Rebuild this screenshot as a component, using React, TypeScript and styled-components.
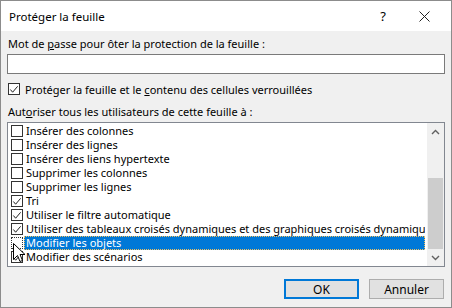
import styled, { createGlobalStyle } from "styled-components";

const GlobalStyle = createGlobalStyle`
  html, body {
    margin: 0;
    padding: 0;
    background: #ffffff;
  }
  body {
    font-family: "Segoe UI", "Noto Sans", "DejaVu Sans", sans-serif;
    font-size: 11px;
    color: #000000;
  }
`;

const items = [
  { label: "Insérer des colonnes", checked: false },
  { label: "Insérer des lignes", checked: false },
  { label: "Insérer des liens hypertexte", checked: false },
  { label: "Supprimer les colonnes", checked: false },
  { label: "Supprimer les lignes", checked: false },
  { label: "Tri", checked: true },
  { label: "Utiliser le filtre automatique", checked: true },
  {
    label:
      "Utiliser des tableaux croisés dynamiques et des graphiques croisés dynamiques",
    checked: true,
  },
  { label: "Modifier les objets", checked: false, selected: true },
  { label: "Modifier des scénarios", checked: true },
];

function Check({ checked, dotted }: { checked?: boolean; dotted?: boolean }) {
  return (
    <Box $dotted={dotted}>
      {checked && (
        <svg width="11" height="11" viewBox="0 0 11 11">
          <polyline
            points="1.5,5.5 4,8.5 9.5,2"
            fill="none"
            stroke="#222"
            strokeWidth="1.1"
          />
        </svg>
      )}
    </Box>
  );
}

export default function App() {
  return (
    <>
      <GlobalStyle />
      <Window>
        <TitleBar>
          <Title>Protéger la feuille</Title>
          <Help>?</Help>
          <CloseButton>
            <svg width="11" height="11" viewBox="0 0 11 11">
              <path d="M0.5 0.5 L10.5 10.5 M10.5 0.5 L0.5 10.5" stroke="#222" strokeWidth="1" />
            </svg>
          </CloseButton>
        </TitleBar>
        <Body>
          <Label>
            Mot de <u>p</u>asse pour ôter la protection de la feuille :
          </Label>
          <Input />
          <CheckRow>
            <Check checked />
            <span>
              Protéger la feuille et le <u>c</u>ontenu des cellules verrouillées
            </span>
          </CheckRow>
          <ListLabel>
            Aut<u>o</u>riser tous les utilisateurs de cette feuille à :
          </ListLabel>
          <List>
            <Items>
              {items.map((it) => (
                <Row key={it.label}>
                  <Check checked={it.checked} dotted={it.selected} />
                  <ItemText $selected={it.selected}>{it.label}</ItemText>
                </Row>
              ))}
            </Items>
            <Scrollbar>
              <Arrow>
                <svg width="9" height="6" viewBox="0 0 9 6">
                  <polyline points="1,5 4.5,1.5 8,5" fill="none" stroke="#606060" strokeWidth="1.4" />
                </svg>
              </Arrow>
              <Track>
                <Thumb />
              </Track>
              <Arrow>
                <svg width="9" height="6" viewBox="0 0 9 6">
                  <polyline points="1,1 4.5,4.5 8,1" fill="none" stroke="#606060" strokeWidth="1.4" />
                </svg>
              </Arrow>
            </Scrollbar>
          </List>
          <Footer>
            <Button $primary>OK</Button>
            <Button>Annuler</Button>
          </Footer>
        </Body>
        <Cursor width="13" height="21" viewBox="0 0 13 21">
          <path
            d="M0.5 0.5 L0.5 16.5 L4.5 12.5 L7 18.5 L9.5 17.5 L7 11.5 L12 11.5 Z"
            fill="#ffffff"
            stroke="#000000"
            strokeWidth="1"
          />
        </Cursor>
      </Window>
    </>
  );
}

const Window = styled.div`
  position: relative;
  width: 452px;
  height: 308px;
  box-sizing: border-box;
  border: 1px solid #8c8c8c;
  display: flex;
  flex-direction: column;
  overflow: hidden;
`;

const TitleBar = styled.div`
  height: 30px;
  flex: none;
  display: flex;
  align-items: center;
  background: #ffffff;
  padding-left: 8px;
`;

const Title = styled.div`
  flex: 1;
  font-size: 11.5px;
`;

const Help = styled.div`
  width: 20px;
  font-size: 13px;
  text-align: center;
  margin-right: 8px;
`;

const CloseButton = styled.div`
  width: 46px;
  display: flex;
  justify-content: center;
  padding-right: 4px;
  padding-top: 1px;
`;

const Body = styled.div`
  flex: 1;
  background: #f0f0f0;
  padding: 5px 6px 0 6px;
  display: flex;
  flex-direction: column;
`;

const Label = styled.div`
  line-height: 16px;
  padding-left: 1px;
`;

const Input = styled.div`
  margin-top: 2px;
  height: 20px;
  box-sizing: border-box;
  border: 1px solid #7a7a7a;
  background: #ffffff;
`;

const CheckRow = styled.div`
  display: flex;
  align-items: center;
  gap: 5px;
  margin-top: 8px;
  height: 14px;
  padding-left: 1px;
`;

const Box = styled.div<{ $dotted?: boolean }>`
  width: 12px;
  height: 12px;
  box-sizing: border-box;
  border: 1px ${({ $dotted }) => ($dotted ? "dotted" : "solid")} #333333;
  background: #ffffff;
  display: flex;
  align-items: center;
  justify-content: center;
  flex: none;
`;

const ListLabel = styled.div`
  line-height: 16px;
  margin-top: 8px;
  padding-left: 1px;
`;

const List = styled.div`
  margin-top: 2px;
  height: 145px;
  box-sizing: border-box;
  border: 1px solid #828790;
  background: #ffffff;
  display: flex;
  width: 438px;
`;

const Items = styled.div`
  flex: 1;
  min-width: 0;
  padding-top: 1px;
`;

const Row = styled.div`
  height: 14px;
  display: flex;
  align-items: center;
  padding-left: 3px;
`;

const ItemText = styled.div<{ $selected?: boolean }>`
  flex: 1;
  min-width: 0;
  white-space: nowrap;
  overflow: hidden;
  line-height: 14px;
  margin-left: 1px;
  margin-right: 2px;
  padding-left: 2px;
  background: ${({ $selected }) => ($selected ? "#0078d7" : "transparent")};
  color: ${({ $selected }) => ($selected ? "#ffffff" : "#000000")};
  outline: ${({ $selected }) => ($selected ? "1px dotted #f0c060" : "none")};
  outline-offset: -1px;
`;

const Scrollbar = styled.div`
  width: 17px;
  flex: none;
  background: #f0f0f0;
  display: flex;
  flex-direction: column;
`;

const Arrow = styled.div`
  height: 17px;
  display: flex;
  align-items: center;
  justify-content: center;
`;

const Track = styled.div`
  flex: 1;
  display: flex;
  flex-direction: column;
  justify-content: flex-end;
`;

const Thumb = styled.div`
  height: 71px;
  margin: 0 1px;
  background: #cdcdcd;
`;

const Footer = styled.div`
  display: flex;
  justify-content: flex-end;
  gap: 10px;
  margin-top: 12px;
  padding-right: 1px;
`;

const Button = styled.div<{ $primary?: boolean }>`
  width: 75px;
  height: 20px;
  box-sizing: border-box;
  display: flex;
  align-items: center;
  justify-content: center;
  font-size: 12px;
  background: #e1e1e1;
  border: ${({ $primary }) => ($primary ? "2px solid #0078d7" : "1px solid #adadad")};
`;

const Cursor = styled.svg`
  position: absolute;
  left: 12px;
  top: 242px;
`;
